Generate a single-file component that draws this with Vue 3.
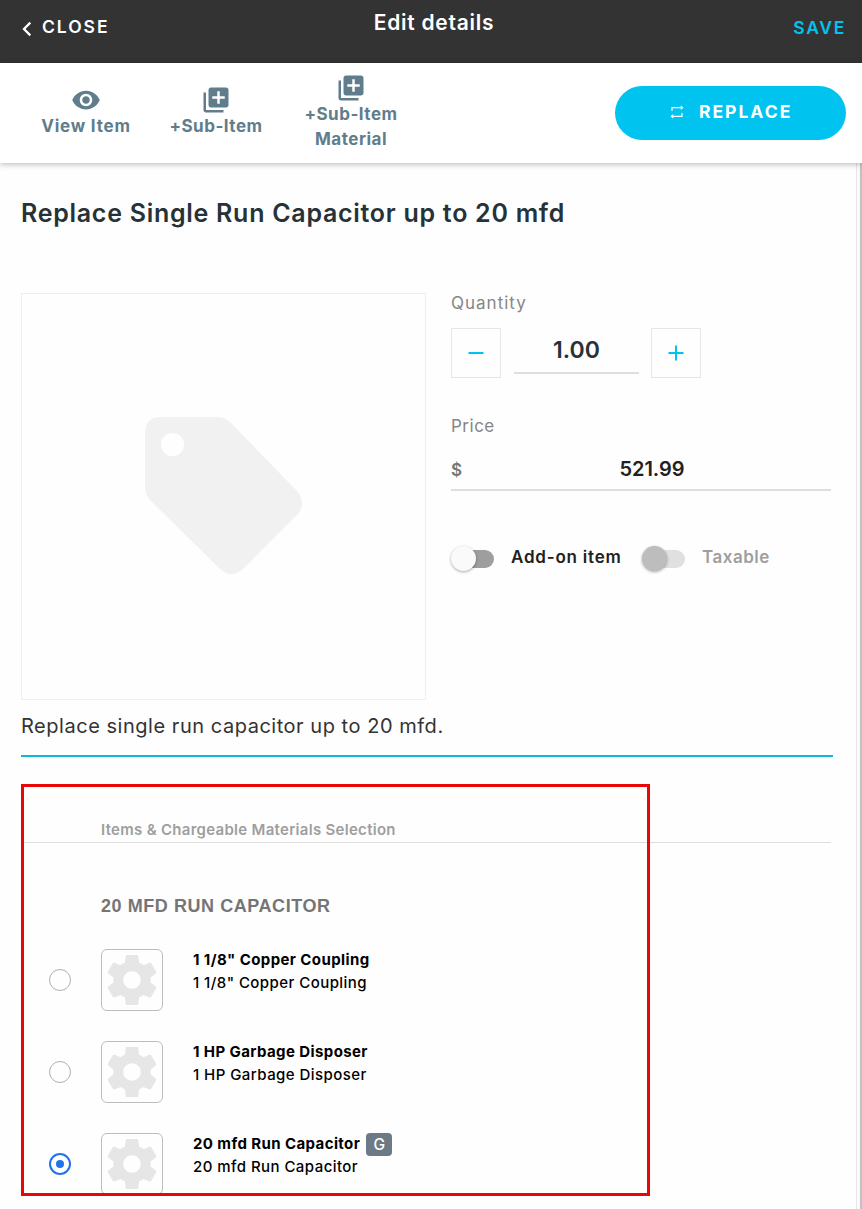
<template>
  <div class="page">
    <header class="topbar">
      <button class="close-button">
        <svg class="chevron" viewBox="0 0 10 16">
          <path d="M8.3 1.6L2 8l6.3 6.4" fill="none" stroke="#fff" stroke-width="2.3" />
        </svg>
        <span class="close-label">CLOSE</span>
      </button>
      <h1 class="topbar-title">Edit details</h1>
      <button class="save-button">SAVE</button>
    </header>

    <nav class="toolbar">
      <div class="actions">
        <button v-for="action in actions" :key="action.id" class="action" :class="action.id">
          <svg class="action-icon" viewBox="0 0 24 24">
            <path :d="icons[action.icon]" />
          </svg>
          <span v-for="line in action.lines" :key="line" class="action-line">{{ line }}</span>
        </button>
      </div>
      <button class="replace-button">
        <svg class="replace-icon" viewBox="0 0 14 14">
          <path d="M2 6V2.7h9M12 8v3.3H3" fill="none" stroke="#fff" stroke-width="1.2" />
          <path d="M10.8.3l2.7 2.4-2.7 2.4zM3.2 8.9L.5 11.3l2.7 2.4z" fill="#fff" />
        </svg>
        <span class="replace-label">REPLACE</span>
      </button>
    </nav>

    <main class="content">
      <h2 class="item-title">Replace Single Run Capacitor up to 20 mfd</h2>

      <section class="details">
        <div class="item-image">
          <svg class="tag-icon" viewBox="0 0 157 157">
            <path
              fill-rule="evenodd"
              d="M16 0H73Q80 0 86 6L152 74Q162 86 152 98L98 152Q86 162 75 152L5 83Q0 77 0 71V16Q0 0 16 0zM27.500 16a11.500 11.500 0 1 0 0 23a11.500 11.500 0 1 0 0-23z" />
          </svg>
        </div>

        <div class="fields">
          <label class="field-label quantity-label">Quantity</label>
          <div class="stepper">
            <button class="step" @click="changeQuantity(-1)">
              <svg viewBox="0 0 16 16"><path d="M.5 8h15" /></svg>
            </button>
            <div class="quantity">{{ quantity.toFixed(2) }}</div>
            <button class="step" @click="changeQuantity(1)">
              <svg viewBox="0 0 16 16"><path d="M.5 8h15M8 .5v15" /></svg>
            </button>
          </div>

          <label class="field-label">Price</label>
          <div class="price">
            <span class="currency">$</span>
            <span class="amount">521.99</span>
          </div>

          <div class="toggles">
            <span class="toggle"><i class="track"></i><i class="thumb"></i></span>
            <span class="toggle-label addon">Add-on item</span>
            <span class="toggle disabled"><i class="track"></i><i class="thumb"></i></span>
            <span class="toggle-label taxable">Taxable</span>
          </div>
        </div>
      </section>

      <p class="description">Replace single run capacitor up to 20 mfd.</p>

      <section class="materials">
        <h3 class="materials-title"><span>Items &amp; Chargeable Materials Selection</span></h3>
        <h4 class="group-title">20 MFD RUN CAPACITOR</h4>
        <div class="options">
          <div v-for="item in items" :key="item.id" class="option" @click="selected = item.id">
            <span class="radio" :class="{ checked: selected === item.id }"></span>
            <div class="option-image">
              <svg viewBox="0 0 24 24"><path :d="icons.gear" /></svg>
            </div>
            <div class="option-text">
              <div class="option-name">
                <span>{{ item.name }}</span>
                <span v-if="item.badge" class="badge">{{ item.badge }}</span>
              </div>
              <div class="option-description">{{ item.name }}</div>
            </div>
          </div>
        </div>
        <div class="highlight"></div>
      </section>
      <div class="scrollbar"></div>
    </main>
  </div>
</template>

<script setup>
import { ref } from 'vue'

const icons = {
  eye: 'M12 4.5C7 4.500 2.730 7.610 1 12c1.730 4.390 6 7.500 11 7.500s9.270-3.110 11-7.500c-1.730-4.390-6-7.500-11-7.500zM12 17c-2.760 0-5-2.240-5-5s2.240-5 5-5 5 2.240 5 5-2.240 5-5 5zm0-8c-1.660 0-3 1.340-3 3s1.340 3 3 3 3-1.340 3-3-1.340-3-3-3z',
  add: 'M4 6H2v14c0 1.100.9 2 2 2h14v-2H4V6zm16-4H8c-1.100 0-2 .9-2 2v12c0 1.100.9 2 2 2h12c1.100 0 2-.9 2-2V4c0-1.100-.9-2-2-2zm-1 9h-4v4h-2v-4H9V9h4V5h2v4h4v2z',
  gear: 'M19.430 12.980c.04-.32.07-.64.07-.98s-.03-.66-.07-.98l2.110-1.650c.19-.15.24-.42.12-.64l-2-3.460c-.12-.22-.39-.3-.61-.22l-2.490 1c-.52-.4-1.080-.73-1.690-.98l-.38-2.650C14.460 2.180 14.250 2 14 2h-4c-.25 0-.46.18-.49.42l-.38 2.650c-.61.25-1.170.59-1.690.98l-2.490-1c-.23-.09-.49 0-.61.22l-2 3.460c-.13.22-.07.49.12.64l2.110 1.650c-.04.32-.07.65-.07.98s.03.66.07.98l-2.110 1.650c-.19.15-.24.42-.12.64l2 3.460c.12.22.39.3.61.22l2.490-1c.52.4 1.080.73 1.690.98l.38 2.650c.03.24.24.42.49.42h4c.25 0 .46-.18.49-.42l.38-2.650c.61-.25 1.170-.59 1.690-.98l2.490 1c.23.09.49 0 .61-.22l2-3.460c.12-.22.07-.49-.12-.64l-2.110-1.650zM12 15.500c-1.930 0-3.500-1.570-3.500-3.500s1.570-3.500 3.500-3.500 3.500 1.570 3.500 3.500-1.570 3.500-3.500 3.500z'
}

const actions = [
  { id: 'view', icon: 'eye', lines: ['View Item'] },
  { id: 'sub-item', icon: 'add', lines: ['+Sub-Item'] },
  { id: 'sub-material', icon: 'add', lines: ['+Sub-Item', 'Material'] }
]

const items = [
  { id: 'coupling', name: '1 1/8" Copper Coupling' },
  { id: 'disposer', name: '1 HP Garbage Disposer' },
  { id: 'capacitor', name: '20 mfd Run Capacitor', badge: 'G' }
]

const selected = ref('capacitor')
const quantity = ref(1)

const changeQuantity = (step) => {
  quantity.value = Math.max(0, quantity.value + step)
}
</script>

<style>
body {
  background: #fefefe;
}
</style>

<style scoped>
.page {
  display: flex;
  flex-direction: column;
  height: 1209px;
  overflow: hidden;
  font-family: Inter, "Liberation Sans", sans-serif;
  box-sizing: border-box;
}

.page * {
  box-sizing: border-box;
}

button {
  border: none;
  background: none;
  padding: 0;
  font: inherit;
  cursor: pointer;
}

h1,
h2,
h3,
h4,
p {
  margin: 0;
}

svg {
  display: block;
}

span {
  white-space: nowrap;
}

.topbar {
  flex: none;
  display: grid;
  grid-template-columns: 1fr auto 1fr;
  align-items: start;
  height: 63px;
  padding: 0 16px 0 22px;
  background: #333;
  color: #fff;
}

.close-button {
  display: flex;
  align-items: center;
  margin-top: 17px;
  color: #fff;
}

.chevron {
  width: 10px;
  height: 16px;
  margin: 3px 10px 0 0;
}

.close-label {
  font-size: 17.5px;
  line-height: 20px;
  font-weight: 600;
  letter-spacing: 1.95px;
}

.topbar-title {
  margin: 10px 0 0 0;
  font-size: 21px;
  line-height: 26px;
  font-weight: 600;
  letter-spacing: 0.75px;
}

.save-button {
  justify-self: end;
  margin: 18px 0 0 0;
  color: #00c3f0;
  font-size: 17.5px;
  line-height: 20px;
  font-weight: 600;
  letter-spacing: 1.7px;
}

.toolbar {
  position: relative;
  z-index: 1;
  flex: none;
  display: flex;
  align-items: center;
  justify-content: space-between;
  height: 100px;
  padding: 0 16px 0 21px;
  background: #fff;
  box-shadow: 0 1px 6px rgba(0, 0, 0, 0.3);
}

.actions {
  display: flex;
  align-items: center;
  padding-bottom: 2px;
}

.action {
  display: flex;
  flex-direction: column;
  align-items: center;
  width: 130px;
  color: #607d8b;
  font-size: 17px;
  line-height: 25px;
  font-weight: 700;
}

.sub-material {
  width: 140px;
}

.action-icon {
  width: 30px;
  height: 30px;
  margin-bottom: -1px;
  fill: #607d8b;
}

.action-line {
  letter-spacing: 0.5px;
}

.view .action-line {
  letter-spacing: 0.8px;
}

.replace-button {
  display: flex;
  align-items: center;
  width: 231px;
  height: 54px;
  padding: 0 0 2px 55px;
  border-radius: 27px;
  background: #00c3f0;
  color: #fff;
}

.replace-icon {
  width: 14px;
  height: 14px;
  margin-right: 15px;
}

.replace-label {
  padding-bottom: 2px;
  font-size: 17.5px;
  font-weight: 700;
  letter-spacing: 2px;
}

.content {
  position: relative;
  flex: 1;
  padding: 35px 31px 0 21px;
}

.item-title {
  height: 95px;
  color: #263238;
  font-size: 25px;
  line-height: 30px;
  font-weight: 600;
  letter-spacing: 0.72px;
}

.details {
  display: flex;
  gap: 25px;
}

.item-image {
  display: flex;
  align-items: center;
  justify-content: center;
  width: 405px;
  height: 407px;
  border: 1px solid #efefef;
}

.tag-icon {
  width: 157px;
  height: 157px;
  margin-bottom: 3px;
  fill: #f1f1f1;
}

.fields {
  width: 380px;
}

.field-label {
  display: block;
  height: 35px;
  color: #868686;
  font-size: 17px;
  line-height: 20px;
  letter-spacing: 0.5px;
}

.quantity-label {
  letter-spacing: 1px;
}

.stepper {
  display: flex;
  height: 88px;
}

.step {
  display: flex;
  align-items: center;
  justify-content: center;
  width: 50px;
  height: 50px;
  border: 1px solid #e6e6e6;
}

.step svg {
  width: 16px;
  height: 16px;
  stroke: #00c3f0;
  stroke-width: 2;
}

.quantity {
  width: 125px;
  height: 46px;
  margin: 0 12px 0 13px;
  border-bottom: 2px solid #dedede;
  color: #263238;
  text-align: center;
  font-size: 23px;
  line-height: 45px;
  font-weight: 600;
}

.price {
  display: grid;
  grid-template-columns: 22px 1fr;
  height: 40px;
  border-bottom: 2px solid #dedede;
  line-height: 38px;
}

.currency {
  color: #757575;
  font-size: 17px;
  font-weight: 600;
}

.amount {
  color: #212121;
  font-size: 20px;
  line-height: 37px;
  font-weight: 600;
  text-align: center;
}

.toggles {
  display: flex;
  align-items: center;
  margin-top: 54px;
  height: 28px;
}

.toggle {
  position: relative;
  width: 43px;
  height: 26px;
  flex: none;
}

.track {
  position: absolute;
  top: 4px;
  left: 3px;
  width: 40px;
  height: 18px;
  border-radius: 9px;
  background: #9e9e9e;
}

.thumb {
  position: absolute;
  top: 0;
  left: 0;
  width: 25px;
  height: 25px;
  border-radius: 50%;
  background: #fafafa;
  box-shadow: 0 1px 3px rgba(0, 0, 0, 0.35);
}

.disabled .track {
  background: #e0e0e0;
}

.disabled .thumb {
  background: #bdbdbd;
}

.toggle-label {
  margin: 0 0 4px 17px;
  color: #212121;
  font-size: 17px;
  line-height: 20px;
  font-weight: 600;
  letter-spacing: 0.5px;
}

.addon {
  width: 131px;
  letter-spacing: 0.8px;
}

.taxable {
  color: #9e9e9e;
}

.description {
  width: 812px;
  height: 57px;
  padding-top: 11px;
  border-bottom: 2px solid #0bbad3;
  color: #333;
  font-size: 20px;
  line-height: 30px;
  letter-spacing: 0.53px;
}

.materials {
  position: relative;
  width: 810px;
  height: 412px;
  margin-top: 27px;
  padding-top: 36px;
}

.materials-title {
  height: 23px;
  padding-left: 80px;
  border-bottom: 1px solid #dedede;
  color: #9e9e9e;
  font-size: 15px;
  line-height: 20px;
  font-weight: 600;
  letter-spacing: 0.29px;
}

.group-title {
  height: 106px;
  padding: 52px 0 0 80px;
  color: #757575;
  font-family: "Liberation Sans", sans-serif;
  font-size: 18px;
  line-height: 22px;
  font-weight: 700;
  letter-spacing: 0.56px;
}

.options {
  display: flex;
  flex-direction: column;
  gap: 30px;
  height: 244px;
  overflow: hidden;
}

.option {
  flex: none;
  display: flex;
  align-items: center;
  height: 62px;
  padding-left: 28px;
}

.radio {
  display: flex;
  align-items: center;
  justify-content: center;
  width: 22px;
  height: 22px;
  border: 1px solid #b0b0b0;
  border-radius: 50%;
}

.radio.checked {
  border: 2px solid #2272ec;
}

.radio.checked::after {
  content: "";
  width: 8px;
  height: 8px;
  border-radius: 50%;
  background: #2272ec;
}

.option-image {
  display: flex;
  align-items: center;
  justify-content: center;
  width: 62px;
  height: 62px;
  margin: 0 30px;
  border: 1px solid #bdbdbd;
  border-radius: 6px;
}

.option-image svg {
  width: 60px;
  height: 60px;
  fill: #e6e6e6;
}

.option-text {
  align-self: flex-start;
  color: #000;
  font-size: 15px;
  line-height: 21px;
}

.option-name {
  display: flex;
  height: 23px;
  font-weight: 700;
  letter-spacing: 0.4px;
}

.option-description {
  font-weight: 500;
  letter-spacing: 0.44px;
}

.badge {
  width: 26px;
  height: 23px;
  margin-left: 6px;
  border-radius: 4px;
  background: #6c7a86;
  color: #fff;
  text-align: center;
  font-size: 15.5px;
  line-height: 24px;
  font-weight: 500;
  letter-spacing: 0;
}

.highlight {
  position: absolute;
  top: 0;
  left: 0;
  width: 629px;
  height: 412px;
  border: 3px solid #ea0606;
  pointer-events: none;
}

.scrollbar {
  position: absolute;
  top: 0;
  right: 0;
  bottom: 0;
  width: 6px;
  border-left: 1px solid #e8e8e8;
  border-right: 2px solid #c1c1c1;
  background: #fafafa;
}
</style>
